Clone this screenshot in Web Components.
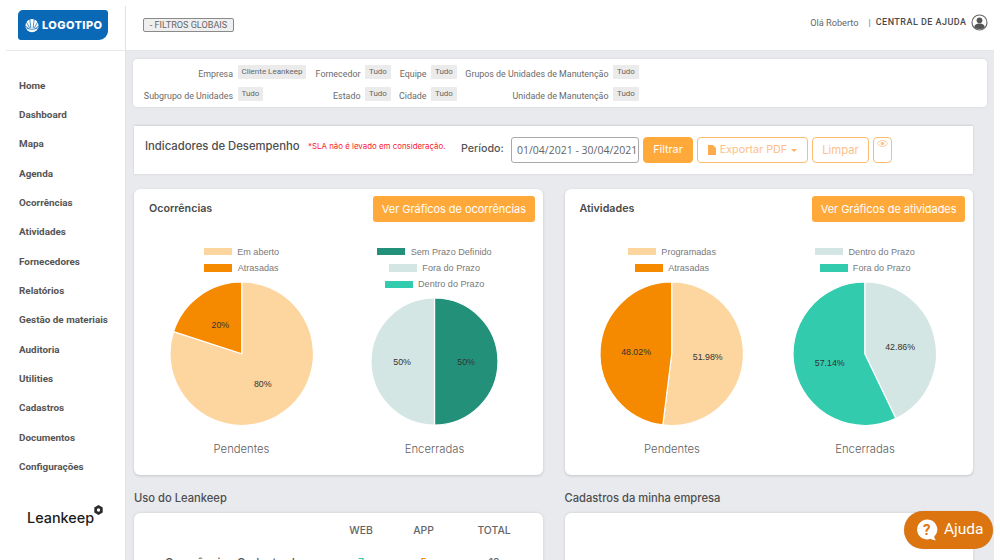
<!DOCTYPE html>
<html lang="pt"><head><meta charset="utf-8"><title>Leankeep</title>
<style>
html,body{margin:0;padding:0;height:560px;overflow:hidden;background:#fff;font-family:Roboto,"Liberation Sans",sans-serif}
</style></head><body>
<app-shell>
  <brand-logo slot="brand"></brand-logo>
  <top-bar slot="top"></top-bar>
  <side-nav slot="nav"></side-nav>
  <filter-panel>
    <filter-field label="Empresa">Cliente Leankeep</filter-field>
    <filter-field label="Fornecedor">Tudo</filter-field>
    <filter-field label="Equipe">Tudo</filter-field>
    <filter-field label="Grupos de Unidades de Manutenção">Tudo</filter-field>
    <filter-field label="Subgrupo de Unidades">Tudo</filter-field>
    <filter-field label="Estado">Tudo</filter-field>
    <filter-field label="Cidade">Tudo</filter-field>
    <filter-field label="Unidade de Manutenção">Tudo</filter-field>
  </filter-panel>
  <indicator-bar></indicator-bar>
  <card-grid>
    <chart-card heading="Ocorrências" action="Ver Gráficos de ocorrências">
      <pie-chart caption="Pendentes" data-chart='{"r":71.75,"legend":[["#fdd59f","Em aberto"],["#f58a00","Atrasadas"]],"slices":[{"c":"#fdd59f","v":80,"t":"80%","x":21,"y":30.6},{"c":"#f58a00","v":20,"t":"20%","x":-21.4,"y":-28.4}]}'></pie-chart>
      <pie-chart caption="Encerradas" data-chart='{"r":63.5,"legend":[["#23917a","Sem Prazo Definido"],["#d3e6e3","Fora do Prazo"],["#32cbae","Dentro do Prazo"]],"slices":[{"c":"#23917a","v":50,"t":"50%","x":31.6,"y":0.7},{"c":"#d3e6e3","v":50,"t":"50%","x":-32.4,"y":0.7}]}'></pie-chart>
    </chart-card>
    <chart-card heading="Atividades" action="Ver Gráficos de atividades">
      <pie-chart caption="Pendentes" data-chart='{"r":71.75,"legend":[["#fdd59f","Programadas"],["#f58a00","Atrasadas"]],"slices":[{"c":"#fdd59f","v":51.98,"t":"51.98%","x":36,"y":3},{"c":"#f58a00","v":48.02,"t":"48.02%","x":-35.7,"y":-1.7}]}'></pie-chart>
      <pie-chart caption="Encerradas" data-chart='{"r":71.75,"legend":[["#d3e6e3","Dentro do Prazo"],["#32cbae","Fora do Prazo"]],"slices":[{"c":"#d3e6e3","v":42.86,"t":"42.86%","x":35.4,"y":-6.7},{"c":"#32cbae","v":57.14,"t":"57.14%","x":-35,"y":9}]}'></pie-chart>
    </chart-card>
    <section-block heading="Uso do Leankeep"><usage-table></usage-table></section-block>
    <section-block heading="Cadastros da minha empresa"></section-block>
  </card-grid>
  <help-button slot="float"></help-button>
</app-shell>
<script>
const HEAD='Inter,"Liberation Sans",sans-serif';
function def(name,html,proto){
  customElements.define(name,class extends HTMLElement{
    constructor(){super();this.attachShadow({mode:'open'}).innerHTML=typeof html==='function'?html(this):html;}
    connectedCallback(){if(proto)proto.call(this);}
  });
}
def('app-shell',`<style>
:host{display:grid;grid-template-columns:126px 868px;grid-template-rows:51px 509px;width:994px;height:560px;overflow:hidden;position:relative;background:#fff}
.main{background:#e9eaee;overflow:hidden;padding:8px 0 0 0;box-sizing:border-box}
</style><slot name="brand"></slot><slot name="top"></slot><slot name="nav"></slot><div class="main"><slot></slot></div><slot name="float"></slot>`);

def('brand-logo',`<style>
:host{display:flex;box-sizing:border-box;margin:6px 0 0 6px;padding:4px 0 0 12px;height:45px;border-bottom:1.5px solid #e8e8e8;border-right:1px solid #e2e2e2}
.b{width:90px;height:30px;background:#0a69b7;border-radius:5px 3px 9px 3px;display:flex;align-items:center;gap:3.5px;padding-left:6.5px;box-sizing:border-box;color:#fff;font:800 11px/1 ${HEAD};letter-spacing:.42px}
svg{width:14px;height:15px;flex:none}
</style><div class="b"><svg viewBox="0 0 14 15"><circle cx="7" cy="7.700" r="6.600" fill="#fff"/><g stroke="#0a69b7" stroke-width=".75" fill="none"><path d="M5.900 10.200L4.600 0M8.100 10.200L9.400 0M4.800 10.400L.6 2.400M9.200 10.400L13.400 2.400M3.900 10.800L-.8 7M10.100 10.800L14.800 7"/><path d="M1.300 9.800c1.500 1 3.400 1.500 5.700 1.500s4.200-.5 5.700-1.500" stroke-width=".7"/></g></svg><span>LOGOTIPO</span></div>`);

def('top-bar',`<style>
:host{display:flex;align-items:center;justify-content:space-between;box-sizing:border-box;height:51px;padding:0 6px 6px 17px;border-bottom:1.5px solid #e6e6e8;font-family:Roboto,"Liberation Sans",sans-serif}
.f{box-sizing:border-box;width:91px;height:14px;border:1px solid #8a8a8a;border-radius:2px;background:#efefef;color:#666;font-size:9.100px;line-height:12px;text-align:center;margin-top:6px;white-space:nowrap}
.r{display:flex;align-items:center;color:#666;font-size:9.200px}
.sep{margin:0 5px 0 10px;color:#777}
b{font-weight:500;color:#4a4a4a;letter-spacing:.47px;font-size:9px}
svg{width:17px;height:17px;margin-left:4.500px}
</style><div class="f">- FILTROS GLOBAIS</div><div class="r"><span>Olá Roberto</span><span class="sep">|</span><b>CENTRAL DE AJUDA</b><svg viewBox="0 0 17 17"><circle cx="8.500" cy="8.500" r="7.500" fill="#fff" stroke="#666" stroke-width="1.100"/><circle cx="8.500" cy="6.300" r="2.900" fill="#555"/><path d="M3.300 13.400c0-3 2.400-4 5.200-4s5.200 1 5.200 4c-1.400 1.100-3.200 1.600-5.200 1.600s-3.800-.5-5.200-1.600z" fill="#555"/></svg></div>`);

const NAV=['Home','Dashboard','Mapa','Agenda','Ocorrências','Atividades','Fornecedores','Relatórios','Gestão de materiais','Auditoria','Utilities','Cadastros','Documentos','Configurações'];
def('side-nav',`<style>
:host{display:block;box-sizing:border-box;border-right:1px solid #e2e2e2;padding:19.800px 0 0 19px;height:509px}
a{display:block;height:29.330px;font:700 9.900px/29.330px Roboto,"Liberation Sans",sans-serif;color:#555;white-space:nowrap}
.lk{display:flex;align-items:flex-start;margin:27.500px 0 0 8px;color:#1b1b1b;font:500 14.400px/18px ${HEAD}}
.lk svg{width:9px;height:10px;margin:-3.500px 0 0 0}
</style>${NAV.map(n=>`<a>${n}</a>`).join('')}<div class="lk"><span>Leankeep</span><svg viewBox="0 0 9 10"><path d="M4.500 0l4.200 2.500v5L4.500 10 .3 7.500v-5z" fill="#2a2a2a"/><circle cx="4.500" cy="5" r="1.700" fill="#fff"/></svg></div>`);

def('filter-panel',`<style>
:host{display:grid;box-sizing:border-box;margin:0 7px 19px 7px;height:48px;padding:6px 0 0 10px;background:#fff;border-radius:4px;box-shadow:0 0 1.500px rgba(0,0,0,.16);
grid-template-columns:90px 74.500px 53px 30px 36px 30px 152px 30px;grid-auto-rows:16px;row-gap:6px;font-family:Roboto,"Liberation Sans",sans-serif}
</style><slot></slot>`);
def('filter-field',el=>`<style>
:host{display:contents}
.l{font-size:8.900px;line-height:16px;color:#6a6a6a;text-align:right;white-space:nowrap;justify-self:end;padding-top:.5px}
.c{justify-self:start;margin-left:4.500px;height:13.500px;line-height:13px;padding:0 4px;background:#ebebeb;color:#666;font-size:8px;white-space:nowrap;border-radius:1px}
</style><span class="l">${el.getAttribute('label')}</span><span class="c"><slot></slot></span>`);

def('indicator-bar',`<style>
:host{display:flex;align-items:flex-start;box-sizing:border-box;margin:0 21px 15px 8px;height:48px;padding:11px 0 0 11px;background:#fff;box-shadow:0 -1px 2px rgba(0,0,0,.1),0 1px 2px rgba(0,0,0,.06);color:#555;font-family:${HEAD}}
h2{margin:0;font:500 11.300px/18px ${HEAD};color:#4e4e4e;white-space:nowrap;width:163px;flex:none}
.sla{color:#f5222f;font:400 7.900px/19px ${HEAD};width:153px;flex:none;white-space:nowrap}
.p{font:500 10.700px/24px ${HEAD};width:50px;flex:none;color:#555}
.d{box-sizing:border-box;width:128px;height:26px;border:1px solid #a9a9a9;border-radius:3px;color:#666;font:400 10.500px/24px "Open Sans",sans-serif;padding-left:5px;white-space:nowrap;flex:none}
.b{box-sizing:border-box;height:26px;border-radius:4px;border:1px solid #fdbc72;color:#fdc188;font:400 10.800px/24px ${HEAD};text-align:center;flex:none;margin-left:4px;white-space:nowrap;display:flex;align-items:center;justify-content:center;gap:4px}
.fl{width:50px;background:#ffa93a;color:#fff;border-color:#ffa93a}
.x{width:111px}.li{width:57px;font-size:11.300px}
.eye{width:19px;align-items:flex-start;padding-top:2px}
svg{flex:none}
.car{width:0;height:0;border:3px solid transparent;border-top-color:#fdb460;border-bottom:0}
</style><h2>Indicadores de Desempenho</h2><span class="sla">*SLA não é levado em consideração.</span><span class="p">Período:</span><div class="d">01/04/2021 - 30/04/2021</div>
<div class="b fl">Filtrar</div>
<div class="b x"><svg width="8" height="10" viewBox="0 0 8 10"><path d="M0 0h5l3 3v7H0z" fill="#fdab4d"/></svg>Exportar PDF<i class="car"></i></div>
<div class="b li">Limpar</div>
<div class="b eye"><svg width="11" height="7" viewBox="0 0 11 7"><path d="M.5 3.500C2 1.300 3.700.5 5.500.5s3.500.8 5 3c-1.500 2.200-3.200 3-5 3s-3.500-.8-5-3z" fill="none" stroke="#fdc188" stroke-width=".9"/><circle cx="5.500" cy="3.500" r="1.700" fill="#fdc188"/></svg></div>`);

def('card-grid',`<style>
:host{display:grid;grid-template-columns:1fr 1fr;column-gap:22px;row-gap:0;margin:0 21px 0 8px;align-items:start}
</style><slot></slot>`);

def('chart-card',el=>`<style>
:host{display:block;box-sizing:border-box;height:286px;background:#fff;border-radius:6px;box-shadow:0 1px 3px rgba(0,0,0,.16);padding:7px 8px 0 11px}
.h{display:flex;justify-content:space-between;align-items:center;height:26px;margin-bottom:21.500px;padding-left:4px}
h3{margin:1px 0 0;font:600 10.700px/1 ${HEAD};color:#4a4a4a}
.btn{height:26px;padding:0 8.500px;background:#ffa93a;color:#fff;border-radius:3px;font:400 11px/26px ${HEAD};letter-spacing:-.05px;white-space:nowrap}
.g{display:grid;grid-template-columns:193px 193px}
</style><div class="h"><h3>${el.getAttribute('heading')}</h3><div class="btn">${el.getAttribute('action')}</div></div><div class="g"><slot></slot></div>`);

def('pie-chart',`<style>
:host{display:flex;flex-direction:column;align-items:center;font-family:"Liberation Sans",Arial,sans-serif}
.box{height:182px;width:100%;display:flex;flex-direction:column;align-items:center}
.lg{padding-bottom:5.700px;display:flex;flex-direction:column;align-items:center}
.r{display:flex;align-items:center;gap:5.300px;height:16.400px;font-size:9.100px;color:#7a7a7a;white-space:nowrap}
.r i{width:28px;height:7.500px;display:block}
svg{display:block;overflow:visible}
text{font:8.800px "Liberation Sans",Arial,sans-serif;fill:#333;text-anchor:middle;dominant-baseline:central}
.cap{margin-top:16px;font:300 11.300px/15px ${HEAD};color:#5f5f5f}
</style><div class="box"><div class="lg"></div><div class="p"></div></div><div class="cap"></div>`,function(){
  const d=JSON.parse(this.dataset.chart),s=this.shadowRoot;
  s.querySelector('.cap').textContent=this.getAttribute('caption');
  s.querySelector('.lg').innerHTML=d.legend.map(l=>`<div class="r"><i style="background:${l[0]}"></i><span>${l[1]}</span></div>`).join('');
  const r=d.r;let a=-Math.PI/2,paths='',labels='';
  d.slices.forEach(x=>{
    const b=a+x.v/100*2*Math.PI,large=x.v>50?1:0;
    paths+=`<path d="M0 0L${r*Math.cos(a)} ${r*Math.sin(a)}A${r} ${r} 0 ${large} 1 ${r*Math.cos(b)} ${r*Math.sin(b)}Z" fill="${x.c}" stroke="#fff" stroke-width="1.200"/>`;
    labels+=`<text x="${x.x}" y="${x.y}">${x.t}</text>`;a=b;
  });
  s.querySelector('.p').innerHTML=`<svg width="${2*r}" height="${2*r}" viewBox="${-r} ${-r} ${2*r} ${2*r}">${paths}${labels}</svg>`;
});

def('section-block',el=>`<style>
:host{display:block}
h3{margin:0;height:38px;padding-top:15.500px;box-sizing:border-box;font:500 11.200px/15px ${HEAD};color:#4e4e4e;white-space:nowrap}
.c{height:120px;background:#fff;border-radius:6px;box-shadow:0 0 3px rgba(0,0,0,.14);overflow:hidden}
</style><h3>${el.getAttribute('heading')}</h3><div class="c"><slot></slot></div>`);

def('usage-table',`<style>
:host{display:grid;grid-template-columns:195.500px 63px 62px 79px;grid-auto-rows:auto;font:500 10.400px/1 ${HEAD};color:#666;text-align:center}
.hd{padding-top:13px;height:33px;box-sizing:border-box}
.n{text-align:left;padding:12px 0 0 31px;color:#555;font-size:11.300px;letter-spacing:.25px;white-space:nowrap}
.v{padding-top:12px}
</style><span class="hd"></span><span class="hd">WEB</span><span class="hd">APP</span><span class="hd">TOTAL</span>
<span class="n">Ocorrências Cadastradas</span><span class="v" style="color:#32cbae">7</span><span class="v" style="color:#f58a00">5</span><span class="v">12</span>`);

def('help-button',`<style>
:host{position:absolute;left:904px;top:511px;width:89px;height:38px;border-radius:19px;background:#dc7510;display:flex;align-items:center;color:#fff;font:400 15.500px/1 Roboto,"Liberation Sans",sans-serif;box-shadow:0 0 1px rgba(0,0,0,.2)}
svg{width:22px;height:22px;margin:0 6px 0 12px;flex:none}
text{font:700 15px Roboto,sans-serif;fill:#dc7510;text-anchor:middle}
</style><svg viewBox="0 0 22 22"><path d="M11 .5a10 10 0 1 0 3.800 19.300c1.400 1.100 3 1.500 5.200 1.400-1-.9-1.600-2-1.800-3.500A10 10 0 0 0 11 .5z" fill="#fff"/><text x="10.800" y="16">?</text></svg><span>Ajuda</span>`);
</script>
</body></html>
